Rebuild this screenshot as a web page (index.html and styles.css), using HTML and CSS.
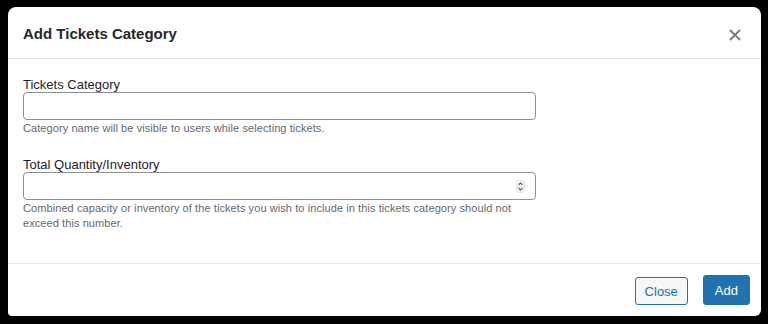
FILE: index.html
```html
<!DOCTYPE html>
<html lang="en">
<head>
<meta charset="utf-8">
<title>Add Tickets Category</title>
<link rel="stylesheet" href="styles.css">
</head>
<body>
<div class="modal">
  <div class="modal-header">
    <h2 class="modal-title">Add Tickets Category</h2>
    <button class="modal-close" aria-label="Close">
      <svg width="12" height="12" viewBox="0 0 12 12"><path d="M1 1 L11 11 M11 1 L1 11" stroke="#787c82" stroke-width="2" stroke-linecap="butt"/></svg>
    </button>
  </div>
  <div class="modal-body">
    <div class="field">
      <label class="field-label">Tickets Category</label>
      <input class="field-input" type="text">
      <p class="field-help">Category name will be visible to users while selecting tickets.</p>
    </div>
    <div class="field">
      <label class="field-label">Total Quantity/Inventory</label>
      <div class="input-wrap">
        <input class="field-input" type="text">
        <svg class="spinner" width="9" height="13" viewBox="0 0 9 13">
          <rect x="0.5" y="0.5" width="8" height="12" rx="3" fill="#efefef" stroke="#e0e0e0"/>
          <path d="M2.6 4.8 L4.5 3 L6.4 4.8" fill="none" stroke="#5a5a5a" stroke-width="1.1"/>
          <path d="M2.6 8.2 L4.5 10 L6.4 8.2" fill="none" stroke="#5a5a5a" stroke-width="1.1"/>
        </svg>
      </div>
      <p class="field-help">Combined capacity or inventory of the tickets you wish to include in this tickets category should not exceed this number.</p>
    </div>
  </div>
  <div class="modal-footer">
    <button class="btn btn-secondary">Close</button>
    <button class="btn btn-primary">Add</button>
  </div>
</div>
</body>
</html>
```
FILE: styles.css
```css
html, body {
  margin: 0;
  padding: 0;
  background: #000;
}
body {
  width: 768px;
  height: 324px;
  overflow: hidden;
  font-family: "Liberation Sans", Arial, sans-serif;
  color: #1d2327;
}
.modal {
  margin: 7px 0 0 8px;
  width: 753px;
  height: 309px;
  background: #fff;
  border-radius: 8px 8px 6px 4px;
  display: flex;
  flex-direction: column;
  overflow: hidden;
}
.modal-header {
  height: 52px;
  box-sizing: border-box;
  border-bottom: 1px solid #e2e4e7;
  display: flex;
  align-items: center;
  justify-content: space-between;
  padding: 1px 20px 0 15px;
}
.modal-title {
  margin: 0;
  font-size: 15px;
  font-weight: 700;
  line-height: 17px;
  color: #23282d;
}
.modal-close {
  border: 0;
  background: none;
  padding: 0;
  width: 12px;
  height: 12px;
  margin-top: 4px;
  display: block;
}
.modal-close svg { display: block; }
.modal-body {
  padding: 19px 15px 0 15px;
  height: 205px;
  box-sizing: border-box;
  border-bottom: 1px solid #e2e4e7;
}
.field {
  width: 513px;
  margin-bottom: 22px;
}
.field-label {
  display: block;
  font-size: 13px;
  line-height: 14px;
  color: #1d2327;
}
.input-wrap {
  position: relative;
}
.field-input {
  display: block;
  box-sizing: border-box;
  width: 513px;
  height: 28px;
  margin: 0;
  border: 1px solid #8c8f94;
  border-radius: 4px;
  background: #fff;
  font-family: inherit;
  font-size: 13px;
}
.spinner {
  position: absolute;
  right: 11px;
  top: 8px;
}
.field-help {
  margin: 1px 0 0 0;
  font-size: 11px;
  line-height: 15px;
  letter-spacing: 0.08px;
  color: #646970;
}
.modal-footer {
  flex: 1;
  display: flex;
  align-items: center;
  justify-content: flex-end;
  gap: 15px;
  padding: 0 11px 0 0;
}
.btn {
  font-family: inherit;
  font-size: 13px;
  box-sizing: border-box;
  border-radius: 3px;
  cursor: pointer;
  margin: 0;
}
.btn-secondary {
  height: 28px;
  padding: 0 9px;
  border: 1px solid #2271b1;
  background: #f6f7f7;
  color: #2271b1;
  margin-top: 2px;
}
.btn-primary {
  height: 30px;
  padding: 0 11px;
  border: 1px solid #2271b1;
  background: #2271b1;
  color: #fff;
}
```
